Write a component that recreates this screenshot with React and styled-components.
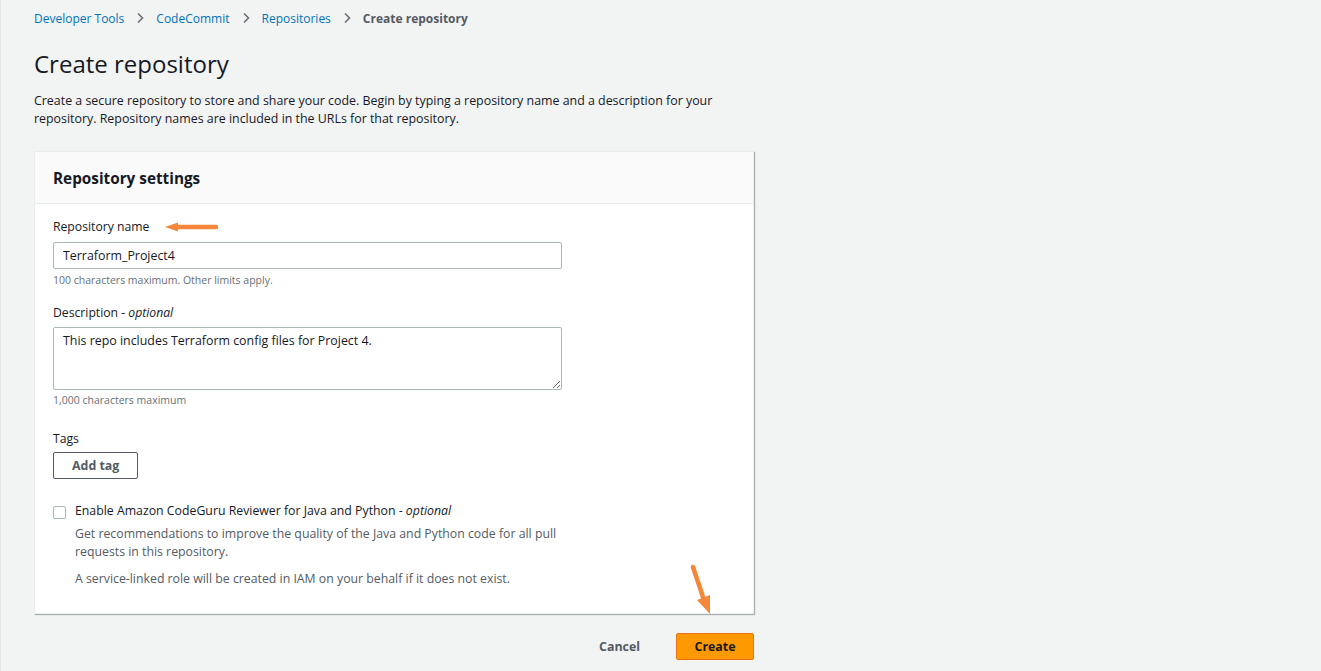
import React, { useState } from 'react';
import styled, { createGlobalStyle } from 'styled-components';

const GlobalStyle = createGlobalStyle`
  html, body {
    margin: 0;
    padding: 0;
    background: #f2f3f3;
  }
  body {
    font-family: "Open Sans", "Liberation Sans", Arial, sans-serif;
    color: #16191f;
  }
  * { box-sizing: border-box; }
`;

const Page = styled.div`
  position: relative;
  min-height: 671px;
  padding: 9px 0 0 33px;
  border-left: 1px solid #e6e8e8;
`;

const Crumbs = styled.nav`
  display: flex;
  align-items: center;
  gap: 11px;
  height: 18px;
  font-size: 12px;
`;

const Crumb = styled.a`
  color: ${p => (p.current ? '#545b64' : '#0073bb')};
  font-weight: ${p => (p.current ? 700 : 400)};
  text-decoration: none;
`;

const Chevron = styled.svg`
  width: 10px;
  height: 12px;
  stroke: #687078;
  stroke-width: 1.6;
  fill: none;
`;

const Title = styled.h1`
  margin: 22px 0 0;
  font-size: 24px;
  font-weight: 400;
  line-height: 30px;
  color: #16191f;
`;

const Lead = styled.p`
  margin: 13px 0 0;
  width: 700px;
  font-size: 12.4px;
  line-height: 17.5px;
  color: #16191f;
`;

const Panel = styled.section`
  margin-top: 24px;
  width: 720px;
  background: #fff;
  border: 1px solid #eaeded;
  box-shadow: 1px 1px 1px 0 rgba(0, 28, 36, 0.3);
`;

const PanelHead = styled.header`
  height: 52px;
  display: flex;
  align-items: center;
  padding: 0 18px;
  background: #fafafa;
  border-bottom: 1px solid #eaeded;
  font-size: 15.3px;
  font-weight: 700;
`;

const PanelBody = styled.div`
  padding: 14px 18px 25px;
`;

const Field = styled.div`
  display: flex;
  flex-direction: column;
  margin-bottom: ${p => p.gap || 20}px;
`;

const Label = styled.label`
  position: relative;
  font-size: 12.2px;
  line-height: 18px;
  margin-bottom: ${p => p.space || 6}px;
  color: #16191f;

  em { font-style: italic; }
`;

const TextInput = styled.input`
  width: 509px;
  height: 27px;
  padding: 0 9px;
  border: 1px solid #aab7b8;
  border-radius: 2px;
  font-family: inherit;
  font-size: 12.4px;
  color: #16191f;
  background: #fff;
`;

const TextArea = styled.textarea`
  width: 509px;
  height: 63px;
  padding: 4px 9px;
  border: 1px solid #aab7b8;
  border-radius: 2px;
  font-family: inherit;
  font-size: 12.4px;
  line-height: 17px;
  color: #16191f;
  resize: vertical;
`;

const Hint = styled.div`
  margin-top: ${p => p.top || 4}px;
  font-size: 10.5px;
  line-height: 15px;
  color: #687078;
`;

const OutlineButton = styled.button`
  align-self: flex-start;
  height: 27px;
  padding: 0 18px;
  background: #fff;
  border: 1px solid #545b64;
  border-radius: 2px;
  font-family: inherit;
  font-size: 12.4px;
  font-weight: 700;
  color: #545b64;
`;

const CheckRow = styled.div`
  display: flex;
  gap: 9px;
  margin-top: 23px;
`;

const Box = styled.input`
  appearance: none;
  margin: 4px 0 0;
  width: 13px;
  height: 13px;
  border: 1px solid #aab7b8;
  border-radius: 2px;
  background: #fff;
  flex-shrink: 0;
`;

const CheckText = styled.div`
  font-size: 12.3px;
  line-height: 18px;
`;

const CheckDesc = styled.p`
  margin: ${p => p.top}px 0 0;
  color: #545b64;
  width: 495px;
`;

const Actions = styled.div`
  display: flex;
  justify-content: flex-end;
  align-items: center;
  gap: 36px;
  width: 720px;
  margin-top: 19px;
`;

const LinkButton = styled.button`
  padding: 0;
  background: none;
  border: none;
  font-family: inherit;
  font-size: 12.4px;
  font-weight: 700;
  color: #545b64;
`;

const PrimaryButton = styled.button`
  width: 78px;
  height: 27px;
  background: #ff9900;
  border: 1px solid #ec7211;
  border-radius: 2px;
  font-family: inherit;
  font-size: 12.4px;
  font-weight: 700;
  color: #16191f;
`;

const Annotation = styled.svg`
  position: absolute;
  left: ${p => p.x}px;
  top: ${p => p.y}px;
  overflow: visible;
`;

const Sep = () => (
  <Chevron viewBox="0 0 10 12">
    <path d="M3 1.5 L7.5 6 L3 10.5" />
  </Chevron>
);

export default function App() {
  const [name, setName] = useState('Terraform_Project4');
  const [desc, setDesc] = useState('This repo includes Terraform config files for Project 4.');

  return (
    <>
      <GlobalStyle />
      <Page>
        <Crumbs>
          <Crumb href="#">Developer Tools</Crumb>
          <Sep />
          <Crumb href="#">CodeCommit</Crumb>
          <Sep />
          <Crumb href="#">Repositories</Crumb>
          <Sep />
          <Crumb current>Create repository</Crumb>
        </Crumbs>

        <Title>Create repository</Title>
        <Lead>
          Create a secure repository to store and share your code. Begin by typing a repository name and a description for your
          repository. Repository names are included in the URLs for that repository.
        </Lead>

        <Panel>
          <PanelHead>Repository settings</PanelHead>
          <PanelBody>
            <Field gap={16}>
              <Label>Repository name</Label>
              <TextInput value={name} onChange={e => setName(e.target.value)} />
              <Hint>100 characters maximum. Other limits apply.</Hint>
            </Field>

            <Field gap={22}>
              <Label space={5}>
                Description - <em>optional</em>
              </Label>
              <TextArea value={desc} onChange={e => setDesc(e.target.value)} />
              <Hint top={3}>1,000 characters maximum</Hint>
            </Field>

            <Field gap={0}>
              <Label space={4}>Tags</Label>
              <OutlineButton type="button">Add tag</OutlineButton>
            </Field>

            <CheckRow>
              <Box type="checkbox" />
              <CheckText>
                Enable Amazon CodeGuru Reviewer for Java and Python - <em>optional</em>
                <CheckDesc top={5}>
                  Get recommendations to improve the quality of the Java and Python code for all pull requests in this repository.
                </CheckDesc>
                <CheckDesc top={9}>A service-linked role will be created in IAM on your behalf if it does not exist.</CheckDesc>
              </CheckText>
            </CheckRow>
          </PanelBody>
        </Panel>

        <Actions>
          <LinkButton type="button">Cancel</LinkButton>
          <PrimaryButton type="button">Create</PrimaryButton>
        </Actions>

        <Annotation x={162} y={221} width="56" height="12" viewBox="0 0 56 12">
          <path d="M14 6 L53 6" stroke="#f5873a" strokeWidth="4.5" strokeLinecap="round" />
          <path d="M2 6 L15 1.5 L15 10.5 Z" fill="#f5873a" />
        </Annotation>

        <Annotation x={685} y={562} width="30" height="56" viewBox="0 0 30 56">
          <path d="M7 5 L18 38" stroke="#f5873a" strokeWidth="4.5" strokeLinecap="round" />
          <path d="M11 38 L24 33 L24 52 Z" fill="#f5873a" />
        </Annotation>
      </Page>
    </>
  );
}
